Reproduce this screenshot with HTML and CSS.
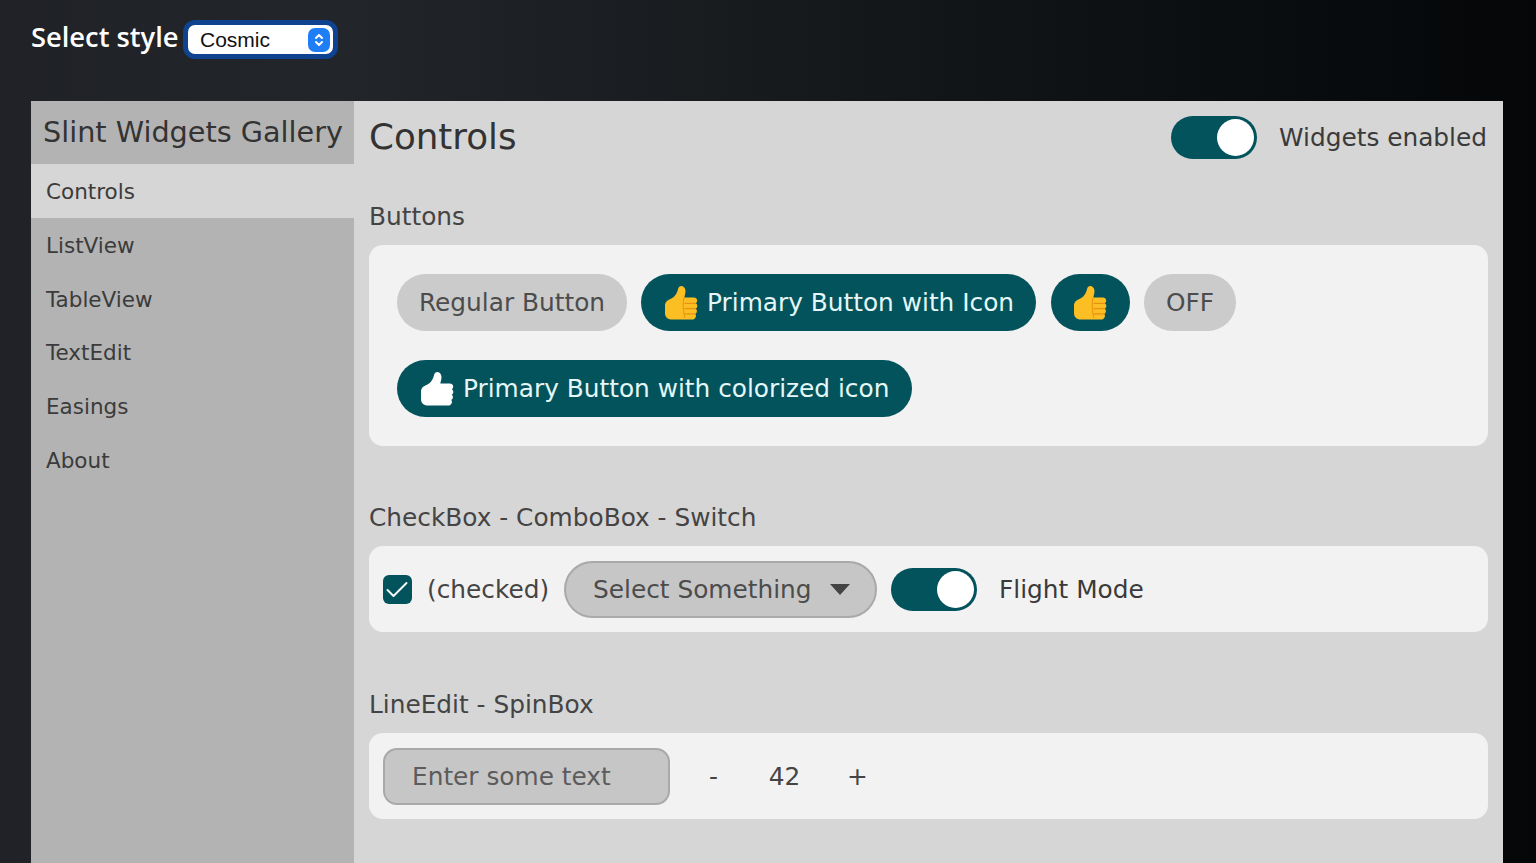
FILE: index.html
```html
<!DOCTYPE html>
<html lang="en">
<head>
<meta charset="utf-8">
<title>Slint Widgets Gallery</title>
<link rel="stylesheet" href="styles.css">
</head>
<body>
<svg class="defs" width="0" height="0" aria-hidden="true">
  <defs>
    <symbol id="thumb" viewBox="0 0 36 36">
      <path d="M2 20.500C2 17 4.500 15.300 8 13.800 11.500 12.300 14 8.500 15 4.300 15.500 1.800 17.500 .6 19.500 1.300 22.300 2.300 23 5.500 22.200 8.700L21.300 12.500H30.500C33 12.500 34.300 14 34.200 15.800 34.100 17 33.500 17.800 32.800 18.300 33.900 19 34.400 20 34.300 21.200 34.200 22.400 33.500 23.200 32.700 23.700 33.700 24.400 34 25.400 33.900 26.500 33.800 27.600 33.100 28.400 32.200 28.900 32.900 29.600 33.100 30.500 32.900 31.400 32.500 33.400 31 34.500 28.800 34.500H9C4.500 34.500 2 32 2 28z" fill="currentColor"/>
      <path class="thumb-lines" d="M22 18.300H32.500M22 23.700H32.500M22 28.900H32" fill="none" stroke-width="1.300" stroke-linecap="round"/>
      <path class="thumb-lines" d="M21.300 12.500C19.500 16 20 27 22 33" fill="none" stroke-width="1"/>
    </symbol>
  </defs>
</svg>
<header class="topbar">
  <span class="topbar-label">Select style</span>
  <span class="style-select">
    <span class="style-value">Cosmic</span>
    <span class="style-stepper">
      <svg width="12" height="18" viewBox="0 0 12 18"><path d="M3 7l3-3 3 3M3 11l3 3 3-3" fill="none" stroke="#fff" stroke-width="2" stroke-linecap="round" stroke-linejoin="round"/></svg>
    </span>
  </span>
</header>
<div class="app">
  <aside class="sidebar">
    <div class="sidebar-title">Slint Widgets Gallery</div>
    <nav class="nav">
      <div class="nav-item selected">Controls</div>
      <div class="nav-item">ListView</div>
      <div class="nav-item">TableView</div>
      <div class="nav-item">TextEdit</div>
      <div class="nav-item">Easings</div>
      <div class="nav-item">About</div>
    </nav>
  </aside>
  <main class="main">
    <div class="page-head">
      <h1 class="page-title">Controls</h1>
      <div class="switch-row">
        <span class="switch"><span class="knob"></span></span>
        <span class="switch-label">Widgets enabled</span>
      </div>
    </div>
    <section class="group group-buttons">
      <h2 class="group-title">Buttons</h2>
      <div class="card card-buttons">
        <div class="btn-row">
          <span class="btn">Regular Button</span>
          <span class="btn primary"><svg class="thumb gold" width="36" height="36"><use href="#thumb"/></svg>Primary Button with Icon</span>
          <span class="btn primary icon-only"><svg class="thumb gold" width="36" height="36"><use href="#thumb"/></svg></span>
          <span class="btn off">OFF</span>
        </div>
        <div class="btn-row">
          <span class="btn primary wide"><svg class="thumb white" width="36" height="36"><use href="#thumb"/></svg>Primary Button with colorized icon</span>
        </div>
      </div>
    </section>
    <section class="group group-check">
      <h2 class="group-title">CheckBox - ComboBox - Switch</h2>
      <div class="card card-row">
        <span class="checkbox"><svg width="29" height="29" viewBox="0 0 29 29"><path d="M4.500 15l6 6L23.500 8" fill="none" stroke="#f3fbfb" stroke-width="2" stroke-linecap="round" stroke-linejoin="round"/></svg></span>
        <span class="check-label">(checked)</span>
        <span class="combo">Select Something<span class="caret"></span></span>
        <span class="switch"><span class="knob"></span></span>
        <span class="switch-label">Flight Mode</span>
      </div>
    </section>
    <section class="group group-line">
      <h2 class="group-title">LineEdit - SpinBox</h2>
      <div class="card card-row">
        <span class="line-edit">Enter some text</span>
        <span class="spin">
          <span class="spin-btn">-</span>
          <span class="spin-value">42</span>
          <span class="spin-btn">+</span>
        </span>
      </div>
    </section>
  </main>
</div>
</body>
</html>
```

FILE: styles.css
```css
* { box-sizing: border-box; }
html, body { margin: 0; height: 100%; }
body {
  width: 1536px;
  height: 863px;
  overflow: hidden;
  background: linear-gradient(90deg, #202227 0%, #22252a 22%, #181c1f 46%, #101416 65%, #040608 100%);
  font-family: "DejaVu Sans", sans-serif;
  color: #333;
  display: flex;
  flex-direction: column;
}
.defs { position: absolute; }
.topbar {
  height: 101px;
  padding: 19px 0 0 31px;
  display: flex;
  align-items: flex-start;
  flex: none;
}
.topbar-label {
  font-family: "Open Sans", sans-serif;
  font-size: 27.300px;
  font-weight: 600;
  line-height: 36px;
  color: #fff;
  white-space: nowrap;
  width: 152px;
  flex: none;
}
.style-select {
  margin-top: 1px;
  width: 155px;
  height: 39px;
  border: 5px solid #0f438f;
  border-radius: 12px;
  background: #fff;
  display: flex;
  align-items: center;
  justify-content: space-between;
  padding: 0 3px 0 12px;
  font-family: "Liberation Sans", sans-serif;
  font-size: 21px;
  color: #111;
}
.style-stepper {
  width: 22px;
  height: 24px;
  border-radius: 7px;
  background: #1f7ef5;
  display: flex;
  align-items: center;
  justify-content: center;
}
.app {
  flex: 1;
  margin: 0 33px 0 31px;
  display: flex;
  min-height: 0;
}
.sidebar {
  width: 323px;
  background: #b3b3b3;
  flex: none;
}
.sidebar-title {
  height: 63px;
  padding-left: 12px;
  font-size: 28.700px;
  line-height: 62px;
  color: #333;
  white-space: nowrap;
}
.nav-item {
  height: 53.800px;
  padding-left: 15px;
  font-size: 21.500px;
  line-height: 55px;
  color: #3b3b3b;
}
.nav-item.selected { background: #d6d6d6; }
.main {
  flex: 1;
  background: #d6d6d6;
  padding: 0 15px 0 15px;
  min-width: 0;
}
.page-head {
  height: 72px;
  display: flex;
  align-items: center;
  justify-content: space-between;
}
.page-title {
  margin: 0 0 2px;
  font-size: 35.700px;
  font-weight: 400;
  color: #333;
}
.switch-row {
  display: flex;
  align-items: center;
  gap: 22px;
  padding-right: 1px;
}
.switch {
  width: 86px;
  height: 43px;
  border-radius: 22px;
  background: #03535d;
  display: flex;
  align-items: center;
  justify-content: flex-end;
  padding-right: 3px;
  flex: none;
}
.knob {
  width: 37px;
  height: 37px;
  border-radius: 50%;
  background: #fff;
}
.switch-label {
  font-size: 24.800px;
  color: #3a3a3a;
  white-space: nowrap;
}
.group-title {
  margin: 0;
  height: 45px;
  font-size: 24.800px;
  font-weight: 400;
  line-height: 34px;
  color: #444;
  white-space: nowrap;
}
.group-buttons { padding-top: 27px; }
.group-check { padding-top: 55px; }
.group-line { padding-top: 56px; }
.card {
  background: #f2f2f2;
  border-radius: 14px;
}
.card-buttons {
  height: 201px;
  padding: 29px 28px 0;
  display: flex;
  flex-direction: column;
  gap: 29px;
}
.card-row {
  height: 86px;
  padding: 1px 14px 0;
  display: flex;
  align-items: center;
}
.btn-row { display: flex; gap: 14px; }
.btn {
  height: 57px;
  border-radius: 29px;
  background: #cbcbcb;
  color: #4c4c4c;
  font-size: 24.800px;
  padding: 0 22px;
  display: inline-flex;
  align-items: center;
  white-space: nowrap;
}
.btn.primary {
  background: #03535d;
  color: #e5f7f7;
  padding: 0 22px;
  gap: 8px;
}
.btn.wide { padding-right: 23px; }
.btn.icon-only { padding: 0 22px 0 21px; margin-left: 1px; }
.thumb { flex: none; }
.thumb.gold { color: #fbbf24; --finger: #e8920f; }
.thumb.white { color: #fff; --finger: transparent; }
.thumb-lines { stroke: var(--finger); }
.checkbox {
  width: 29px;
  height: 29px;
  border-radius: 6px;
  background: #03535d;
  display: flex;
  align-items: center;
  justify-content: center;
  flex: none;
}
.check-label {
  margin-left: 15px;
  font-size: 24.800px;
  color: #444;
  white-space: nowrap;
}
.combo {
  margin-left: 15px;
  width: 313px;
  height: 57px;
  border-radius: 29px;
  background: #c6c6c6;
  border: 2px solid #a9a9a9;
  color: #4c4c4c;
  font-size: 24.800px;
  padding-left: 27px;
  display: flex;
  align-items: center;
  white-space: nowrap;
  flex: none;
}
.caret {
  margin-left: 18px;
  width: 0;
  height: 0;
  border-left: 10px solid transparent;
  border-right: 10px solid transparent;
  border-top: 11px solid #444;
}
.card-row > .switch { margin-left: 14px; }
.card-row > .switch-label { margin-left: 22px; }
.line-edit {
  width: 287px;
  height: 57px;
  border-radius: 14px;
  background: #c6c6c6;
  border: 2px solid #a9a9a9;
  color: #5c5c5c;
  font-size: 24.800px;
  padding-left: 27px;
  display: flex;
  align-items: center;
  white-space: nowrap;
  flex: none;
}
.spin {
  margin-left: 33px;
  display: flex;
  align-items: center;
  font-size: 24.800px;
  color: #444;
}
.spin-btn { width: 21px; text-align: center; flex: none; }
.spin-value { width: 123px; padding-right: 2px; text-align: center; }
```
